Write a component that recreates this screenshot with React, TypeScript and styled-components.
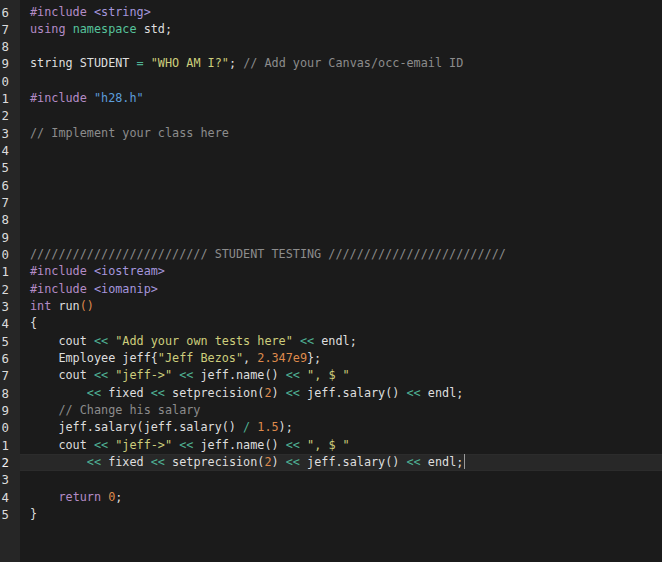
import React from "react";
import styled, { createGlobalStyle } from "styled-components";

const Global = createGlobalStyle`
  html, body { margin: 0; padding: 0; background: #1b1b1b; }
  body { width: 662px; height: 562px; overflow: hidden; }
`;

type Kind = "txt" | "kw" | "inc" | "ns" | "op" | "str" | "hstr" | "cmt" | "num" | "sh";

const COLORS: Record<Kind, string> = {
  txt: "#dedede",
  kw: "#b48bc6",
  inc: "#a596dc",
  ns: "#56c39b",
  op: "#4fb194",
  str: "#cdce7c",
  hstr: "#5d9edc",
  cmt: "#8c8c8c",
  num: "#de8a4c",
  sh: "#4fb194",
};

type Tok = [Kind, string];

const lines: Tok[][] = [
  [["kw", "#include"], ["txt", " "], ["inc", "<string>"]],
  [["kw", "using"], ["txt", " "], ["ns", "namespace"], ["txt", " std;"]],
  [],
  [["txt", "string STUDENT "], ["op", "="], ["txt", " "], ["str", "\"WHO AM I?\""], ["txt", "; "], ["cmt", "// Add your Canvas/occ-email ID"]],
  [],
  [["kw", "#include"], ["txt", " "], ["hstr", "\"h28.h\""]],
  [],
  [["cmt", "// Implement your class here"]],
  [],
  [],
  [],
  [],
  [],
  [],
  [["cmt", "///////////////////////// STUDENT TESTING /////////////////////////"]],
  [["kw", "#include"], ["txt", " "], ["inc", "<iostream>"]],
  [["kw", "#include"], ["txt", " "], ["inc", "<iomanip>"]],
  [["kw", "int"], ["txt", " run"], ["num", "()"]],
  [["txt", "{"]],
  [["txt", "    cout "], ["sh", "<<"], ["txt", " "], ["str", "\"Add your own tests here\""], ["txt", " "], ["sh", "<<"], ["txt", " endl;"]],
  [["txt", "    Employee jeff{"], ["str", "\"Jeff Bezos\""], ["txt", ", "], ["num", "2.347e9"], ["txt", "};"]],
  [["txt", "    cout "], ["sh", "<<"], ["txt", " "], ["str", "\"jeff->\""], ["txt", " "], ["sh", "<<"], ["txt", " jeff.name() "], ["sh", "<<"], ["txt", " "], ["str", "\", $ \""]],
  [["txt", "        "], ["sh", "<<"], ["txt", " fixed "], ["sh", "<<"], ["txt", " setprecision("], ["num", "2"], ["txt", ") "], ["sh", "<<"], ["txt", " jeff.salary() "], ["sh", "<<"], ["txt", " endl;"]],
  [["txt", "    "], ["cmt", "// Change his salary"]],
  [["txt", "    jeff.salary(jeff.salary() "], ["op", "/"], ["txt", " "], ["num", "1.5"], ["txt", ");"]],
  [["txt", "    cout "], ["sh", "<<"], ["txt", " "], ["str", "\"jeff->\""], ["txt", " "], ["sh", "<<"], ["txt", " jeff.name() "], ["sh", "<<"], ["txt", " "], ["str", "\", $ \""]],
  [["txt", "        "], ["sh", "<<"], ["txt", " fixed "], ["sh", "<<"], ["txt", " setprecision("], ["num", "2"], ["txt", ") "], ["sh", "<<"], ["txt", " jeff.salary() "], ["sh", "<<"], ["txt", " endl;"]],
  [],
  [["txt", "    "], ["kw", "return"], ["txt", " "], ["num", "0"], ["txt", ";"]],
  [["txt", "}"]],
];

const FIRST = 16;
const CURRENT = 26;

const Editor = styled.div`
  display: flex;
  flex-direction: column;
  width: 662px;
  height: 562px;
  padding-top: 3.5px;
  box-sizing: border-box;
  background: #1b1b1b;
  font-family: "DejaVu Sans Mono", "Liberation Mono", monospace;
  font-size: 11.8px;
  line-height: 17.33px;
  overflow: hidden;
  position: relative;
`;

const GutterFill = styled.div`
  position: absolute;
  left: 0;
  top: 0;
  bottom: 0;
  width: 20px;
  background: #262626;
`;

const Row = styled.div`
  display: flex;
  height: 17.33px;
  position: relative;
`;

const LineNo = styled.div<{ $active: boolean }>`
  width: 9px;
  padding-left: 1px;
  box-sizing: border-box;
  display: flex;
  justify-content: flex-end;
  color: ${(p) => (p.$active ? "#f4f4f4" : "#dcdcdc")};
  font-size: 12.4px;
  white-space: pre;
  flex: none;
`;

const Spacer = styled.div`
  width: 11px;
  flex: none;
`;

const Code = styled.div<{ $active: boolean }>`
  flex: 1;
  padding-left: 10px;
  white-space: pre;
  color: ${COLORS.txt};
  background: ${(p) => (p.$active ? "#282828" : "transparent")};
  box-shadow: ${(p) => (p.$active ? "inset 0 1px 0 #2c2c2c, inset 0 -1px 0 #2c2c2c" : "none")};
`;

const Span = styled.span<{ $c: string }>`
  color: ${(p) => p.$c};
`;

const Caret = styled.span`
  display: inline-block;
  width: 1px;
  height: 15px;
  margin-left: 1px;
  vertical-align: -3px;
  background: #9a9a9a;
`;

export default function App() {
  return (
    <>
      <Global />
      <Editor>
        <GutterFill />
        {lines.map((toks, i) => {
          const active = i === CURRENT;
          return (
            <Row key={i}>
              <LineNo $active={active}>{String((FIRST + i) % 10)}</LineNo>
              <Spacer />
              <Code $active={active}>
                {toks.map(([k, t], j) => (
                  <Span key={j} $c={COLORS[k]}>
                    {t}
                  </Span>
                ))}
                {active && <Caret />}
              </Code>
            </Row>
          );
        })}
      </Editor>
    </>
  );
}
